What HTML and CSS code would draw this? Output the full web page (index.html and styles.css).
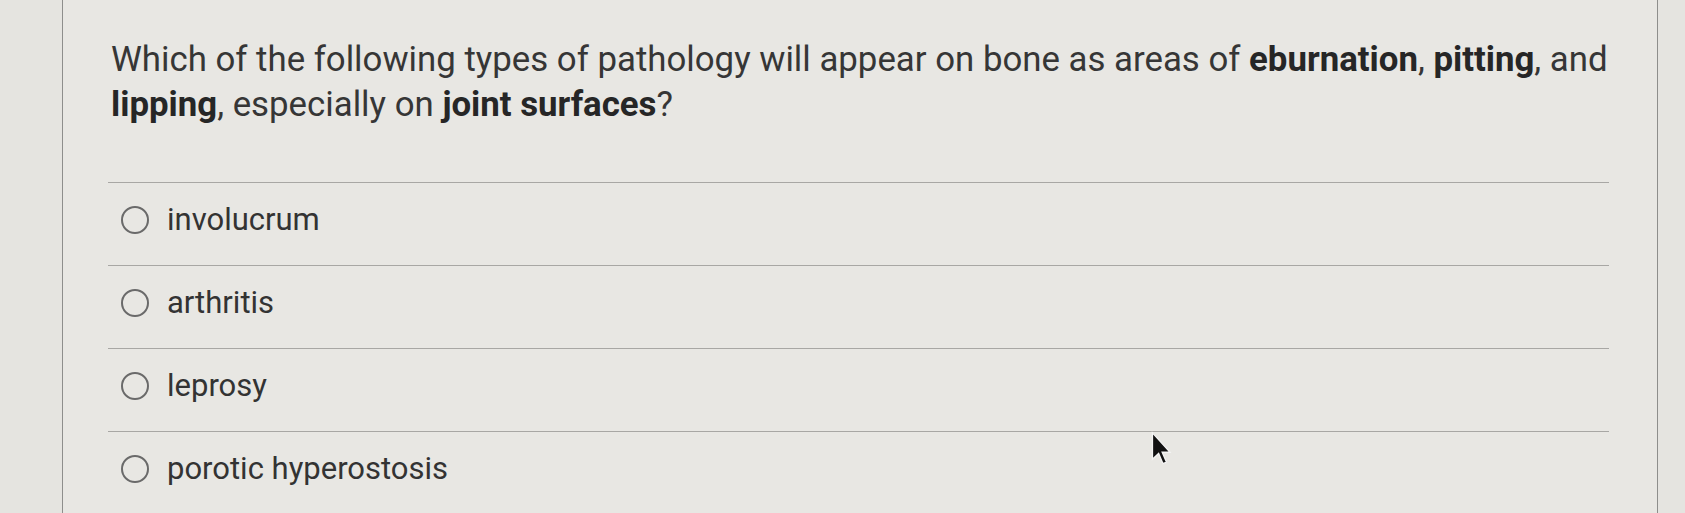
FILE: index.html
```html
<!DOCTYPE html>
<html lang="en">
<head>
<meta charset="utf-8">
<title>Question</title>
<link rel="stylesheet" href="styles.css">
</head>
<body>
<div class="page">
  <div class="frame">
    <p class="question">Which of the following types of pathology will appear on bone as areas of <b>eburnation</b>, <b>pitting</b>, and <b>lipping</b>, especially on <b>joint surfaces</b>?</p>
    <div class="options">
      <label class="option"><span class="radio"></span><span class="label">involucrum</span></label>
      <label class="option"><span class="radio"></span><span class="label">arthritis</span></label>
      <label class="option"><span class="radio"></span><span class="label">leprosy</span></label>
      <label class="option"><span class="radio"></span><span class="label">porotic hyperostosis</span></label>
    </div>
  </div>
  <svg class="cursor" width="22" height="36" viewBox="0 0 15 24">
    <path d="M1 1 L1 19 L5.2 15 L8.2 22 L10.6 21 L7.6 14.2 L13 14.2 Z" fill="#111" stroke="#f4f4f4" stroke-width="0.9"/>
  </svg>
</div>
</body>
</html>
```
FILE: styles.css
```css
html, body {
  margin: 0;
  padding: 0;
}
body {
  background: #e5e4e0;
  font-family: Roboto, "Liberation Sans", sans-serif;
  color: #333;
  width: 1685px;
  height: 513px;
  overflow: hidden;
}
.page {
  position: relative;
  height: 513px;
  display: flex;
}
.frame {
  margin-left: 62px;
  width: 1596px;
  height: 513px;
  box-sizing: border-box;
  border-left: 1px solid #8e8e8c;
  border-right: 1px solid #8e8e8c;
  padding-left: 45px;
  padding-right: 48px;
  background: #e8e7e3;
}
.question {
  margin: 0 -40px 0 3px;
  padding-top: 37px;
  height: 182px;
  box-sizing: border-box;
  font-size: 34.8px;
  line-height: 45px;
  color: #363636;
}
.question b {
  font-weight: 700;
  color: #262626;
}
.options {
  display: flex;
  flex-direction: column;
}
.option {
  display: flex;
  align-items: center;
  height: 83px;
  box-sizing: border-box;
  border-top: 1.5px solid #a8a7a4;
  padding-bottom: 9px;
  padding-left: 13px;
}
.radio {
  width: 24px;
  height: 24px;
  border: 2px solid #6a6a6a;
  border-radius: 50%;
  flex: none;
  margin-right: 18px;
}
.label {
  font-size: 31px;
  line-height: 36px;
  color: #333;
}
.cursor {
  position: absolute;
  left: 1151px;
  top: 431px;
}
```
